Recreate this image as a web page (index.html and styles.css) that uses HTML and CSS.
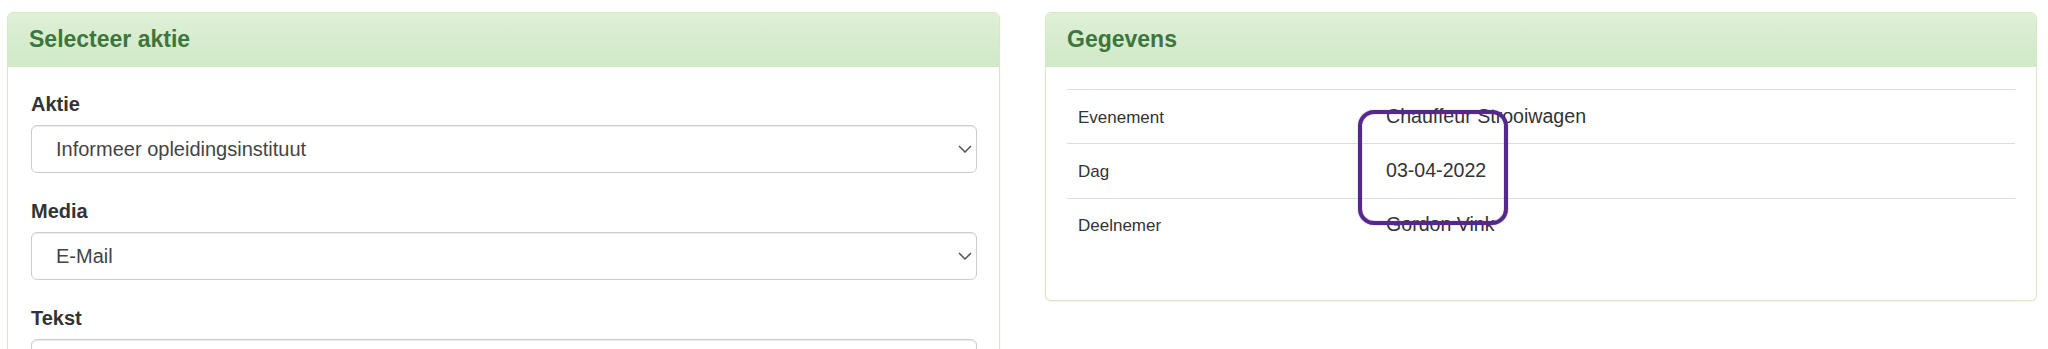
FILE: index.html
```html
<!DOCTYPE html>
<html lang="nl">
<head>
<meta charset="utf-8">
<title>Aktie</title>
<link rel="stylesheet" href="styles.css">
</head>
<body>
<div class="page">
  <section class="panel panel-left">
    <div class="panel-heading"><h3 class="panel-title">Selecteer aktie</h3></div>
    <div class="panel-body">
      <div class="form-group">
        <label class="label">Aktie</label>
        <div class="select">
          <span class="select-text">Informeer opleidingsinstituut</span>
          <svg class="chevron" width="14" height="8" viewBox="0 0 14 8"><polyline points="1,1 7,7 13,1" fill="none" stroke="#555" stroke-width="1.5"/></svg>
        </div>
      </div>
      <div class="form-group">
        <label class="label">Media</label>
        <div class="select">
          <span class="select-text">E-Mail</span>
          <svg class="chevron" width="14" height="8" viewBox="0 0 14 8"><polyline points="1,1 7,7 13,1" fill="none" stroke="#555" stroke-width="1.5"/></svg>
        </div>
      </div>
      <div class="form-group">
        <label class="label">Tekst</label>
        <div class="textarea"></div>
      </div>
    </div>
  </section>

  <section class="panel panel-right">
    <div class="panel-heading"><h3 class="panel-title">Gegevens</h3></div>
    <div class="panel-body">
      <table class="table">
        <tbody>
          <tr><td class="key">Evenement</td><td class="val">Chauffeur Strooiwagen</td></tr>
          <tr><td class="key">Dag</td><td class="val">03-04-2022</td></tr>
          <tr><td class="key">Deelnemer</td><td class="val">Gordon Vink</td></tr>
        </tbody>
      </table>
    </div>
    <div class="annotation"></div>
  </section>
</div>
</body>
</html>
```

FILE: styles.css
```css
html, body {
  margin: 0;
  padding: 0;
  overflow: hidden;
  background: #fff;
}

body {
  font-family: "Liberation Sans", Arial, Helvetica, sans-serif;
  color: #333;
}

.page {
  display: grid;
  grid-template-columns: 993px 992px;
  column-gap: 45px;
  align-items: start;
  padding: 12px 11px 0 7px;
}

.panel {
  background: #fff;
  border: 1px solid #d6e9c6;
  border-radius: 6px;
  box-shadow: 0 1px 2px rgba(0, 0, 0, 0.05);
  box-sizing: border-box;
}

.panel-right {
  position: relative;
}

.panel-heading {
  padding: 14px 21px 14px;
  border-bottom: 1px solid #d6e9c6;
  border-radius: 5px 5px 0 0;
  background: linear-gradient(to bottom, #dff0d8 0%, #d0e9c6 100%);
}

.panel-title {
  margin: 0;
  font-size: 23px;
  line-height: 25px;
  font-weight: bold;
  color: #3c763d;
}

.panel-left .panel-body {
  padding: 23px 22px 0 23px;
}

.panel-right .panel-body {
  padding: 22px 21px 20px 21px;
}

.form-group {
  margin-bottom: 24px;
}

.label {
  display: block;
  font-size: 20px;
  line-height: 28px;
  font-weight: bold;
  color: #333;
  margin-bottom: 7px;
}

.select {
  height: 48px;
  box-sizing: border-box;
  border: 1px solid #ccc;
  border-radius: 6px;
  background: #fff;
  box-shadow: inset 0 1px 1px rgba(0, 0, 0, 0.075);
  display: flex;
  align-items: center;
  justify-content: space-between;
  padding: 0 4px 0 24px;
}

.select-text {
  font-size: 20px;
  color: #444;
}

.chevron {
  display: block;
}

.textarea {
  height: 60px;
  box-sizing: border-box;
  border: 1px solid #ccc;
  border-radius: 6px;
  box-shadow: inset 0 1px 1px rgba(0, 0, 0, 0.075);
}

.table {
  width: 100%;
  border-collapse: collapse;
  margin-bottom: 28px;
}

.table td {
  border-top: 1px solid #dcdcdc;
  padding: 11.65px 11px;
  line-height: 28px;
  vertical-align: baseline;
}

.table .key {
  width: 286px;
  font-size: 17px;
  color: #333;
}

.table .val {
  font-size: 19.6px;
  color: #333;
}

.annotation {
  position: absolute;
  left: 312px;
  top: 97px;
  width: 150px;
  height: 115px;
  box-sizing: border-box;
  border: 4px solid #55288a;
  border-radius: 16px;
  box-shadow: 0 0 1px #55288a, inset 0 0 1px #55288a;
}
```
